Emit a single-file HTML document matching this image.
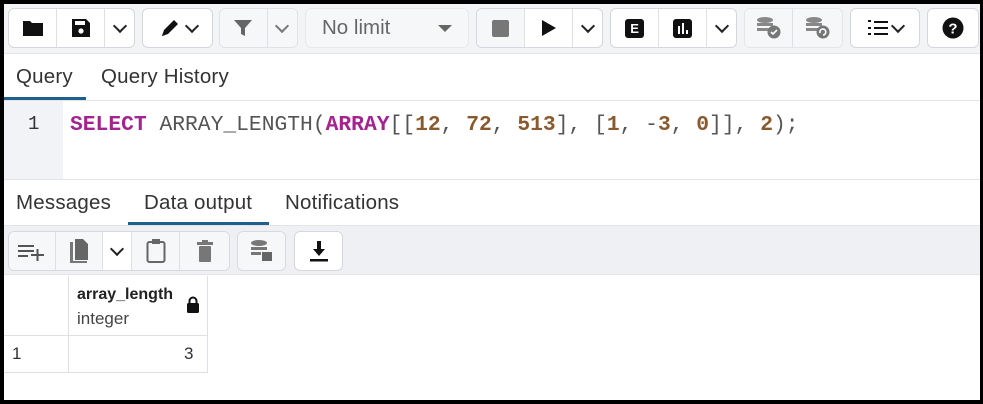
<!DOCTYPE html>
<html><head><meta charset="utf-8"><style>
*{box-sizing:border-box;margin:0;padding:0}
body{width:983px;height:404px;background:#000;position:relative;overflow:hidden;font-family:"Liberation Sans",sans-serif}
#f{position:absolute;left:4px;top:4px;width:976px;height:396px;background:#fff;overflow:hidden}
.a{position:absolute}
.tb{position:absolute;top:0;left:0;width:976px;height:50px;background:#f3f4f6;border-bottom:1px solid #e2e4e8}
.g{position:absolute;top:4px;height:40px;background:#fff;border:1px solid #d4d7dd;border-radius:6px;display:flex;overflow:hidden}
.g>div{height:100%;border-right:1px solid #dde0e5;display:flex;align-items:center;justify-content:center}
.g>div:last-child{border-right:none}
.dis{background:#f6f7f9!important}
.chev{width:10px;height:10px;border-right:2px solid #222;border-bottom:2px solid #222;transform:rotate(45deg);margin-top:-5px}
.tab{position:absolute;font-size:20.5px;color:#333;letter-spacing:0.2px}
</style></head><body><div id="f">
<div class="tb">
 <div class="g" style="left:4px;width:127px">
  <div style="width:49px"><svg width="22" height="18" viewBox="0 0 22 18"><path d="M1 2h7l2 2h11v13H1z" fill="#111"/></svg></div>
  <div style="width:49px"><svg width="20" height="20" viewBox="0 0 20 20"><path d="M1 1h14l4 4v14H1z" fill="#111"/><rect x="4" y="3" width="10" height="4" fill="#fff"/><circle cx="10" cy="13" r="2.6" fill="#fff"/></svg></div>
  <div style="width:29px"><div class="chev"></div></div>
 </div>
 <div class="g" style="left:138px;width:71px"><div style="width:71px;gap:6px"><svg width="22" height="22" viewBox="0 0 22 22"><path d="M3 19l2-6L15 3l4 4L9 17z" fill="#111"/><path d="M3 19l1-3 2 2z" fill="#111"/></svg><div class="chev"></div></div></div>
 <div class="g dis" style="left:215px;width:79px;border-color:#e0e2e6">
  <div class="dis" style="width:49px"><svg width="20" height="20" viewBox="0 0 20 20"><path d="M1 2h18l-7 8v8l-4-2v-6z" fill="#666"/></svg></div>
  <div class="dis" style="width:30px"><div class="chev" style="border-color:#777"></div></div>
 </div>
 <div class="g dis" style="left:301px;width:164px;border-color:#e6e8eb"><div class="dis" style="width:164px;justify-content:space-between;padding:0 16px;font-size:20.5px;color:#666">No limit<span style="border-left:7px solid transparent;border-right:7px solid transparent;border-top:7px solid #666"></span></div></div>
 <div class="g" style="left:472px;width:127px">
  <div class="dis" style="width:49px"><div style="width:17px;height:17px;background:#777;border-radius:2px"></div></div>
  <div style="width:49px"><svg width="16" height="18"><path d="M1 1l14 8-14 8z" fill="#111"/></svg></div>
  <div style="width:29px"><div class="chev"></div></div>
 </div>
 <div class="g" style="left:606px;width:127px">
  <div style="width:49px"><div style="width:19px;height:19px;background:#111;border-radius:3px;color:#fff;font-size:13px;font-weight:bold;text-align:center;line-height:19px">E</div></div>
  <div style="width:49px"><svg width="19" height="19"><rect width="19" height="19" rx="3" fill="#111"/><rect x="5" y="7" width="2" height="8" fill="#fff"/><rect x="9" y="4" width="2" height="11" fill="#fff"/><rect x="13" y="11" width="2" height="4" fill="#fff"/></svg></div>
  <div style="width:29px"><div class="chev"></div></div>
 </div>
 <div class="g dis" style="left:740px;width:99px;border-color:#e3e5e8">
  <div class="dis" style="width:49px"><svg width="26" height="24"><ellipse cx="9" cy="4" rx="8" ry="3" fill="#888"/><rect x="1" y="7" width="16" height="3" fill="#888"/><rect x="1" y="12" width="12" height="3" fill="#888"/><circle cx="18" cy="16" r="6.5" fill="#777"/><path d="M15 16l2 2 4-4" stroke="#fff" stroke-width="1.6" fill="none"/></svg></div>
  <div class="dis" style="width:50px"><svg width="26" height="24"><ellipse cx="9" cy="4" rx="8" ry="3" fill="#888"/><rect x="1" y="7" width="16" height="3" fill="#888"/><rect x="1" y="12" width="12" height="3" fill="#888"/><circle cx="18" cy="16" r="6.5" fill="#777"/><path d="M15 17a3 3 0 1 1 3 2" stroke="#fff" stroke-width="1.6" fill="none"/></svg></div>
 </div>
 <div class="g" style="left:846px;width:70px"><div style="width:70px;gap:4px"><svg width="22" height="20"><g fill="#111"><rect x="7" y="3" width="14" height="2"/><rect x="7" y="9" width="14" height="2"/><rect x="7" y="15" width="14" height="2"/><rect x="1" y="2" width="3" height="2"/><rect x="1" y="9" width="3" height="2"/><rect x="1" y="15" width="3" height="2"/></g></svg><div class="chev"></div></div></div>
 <div class="g" style="left:923px;width:52px"><div style="width:52px"><svg width="22" height="22"><circle cx="11" cy="11" r="10.5" fill="#111"/><text x="11" y="16.5" text-anchor="middle" font-size="15" font-weight="bold" fill="#fff" font-family="Liberation Sans">?</text></svg></div></div>
</div>
<div class="tab" style="left:12px;top:61px">Query</div>
<div class="tab" style="left:97px;top:61px">Query History</div>
<div class="a" style="left:0;top:93px;width:82px;height:3px;background:#1f5f8b"></div>
<div class="a" style="left:0;top:96px;width:976px;height:1px;background:#e2e4e8"></div>
<div class="a" style="left:0;top:97px;width:59px;height:78px;background:#f2f3f6"></div>
<div class="a" style="left:24px;top:109px;font-family:'Liberation Mono',monospace;font-size:19px;color:#333">1</div>
<div class="a" style="left:66px;top:109px;font-family:'Liberation Mono',monospace;font-size:21.3px;color:#555;white-space:pre"><b style="color:#a3238f">SELECT</b> ARRAY_LENGTH(<b style="color:#a3238f">ARRAY</b>[[<b style="color:#8a5a2e">12</b>, <b style="color:#8a5a2e">72</b>, <b style="color:#8a5a2e">513</b>], [<b style="color:#8a5a2e">1</b>, -<b style="color:#8a5a2e">3</b>, <b style="color:#8a5a2e">0</b>]], <b style="color:#8a5a2e">2</b>);</div>
<div class="a" style="left:0;top:175px;width:976px;height:1px;background:#e2e4e8"></div>
<div class="tab" style="left:12px;top:187px">Messages</div>
<div class="tab" style="left:140px;top:187px">Data output</div>
<div class="tab" style="left:281px;top:187px">Notifications</div>
<div class="a" style="left:124px;top:218px;width:141px;height:3px;background:#1f5f8b"></div>
<div class="a" style="left:0;top:221px;width:976px;height:50px;background:#eef0f4;border-top:1px solid #e2e4e8;border-bottom:1px solid #e2e4e8"></div>
<div class="g" style="top:227px;left:4px;width:222px;border-color:#d6d9de">
 <div class="dis" style="width:47px"><svg width="30" height="20"><g fill="#555"><rect x="1" y="4" width="16" height="2"/><rect x="1" y="9" width="16" height="2"/><rect x="1" y="14" width="10" height="2"/><rect x="14" y="13" width="13" height="2"/><rect x="19.5" y="8" width="2" height="12"/></g></svg></div>
 <div class="dis" style="width:48px"><svg width="22" height="26"><path d="M2 4h3v19h14v2H2z" fill="#777"/><path d="M7 1h8l5 5v16H7z" fill="#666"/></svg></div>
 <div style="width:29px"><div class="chev"></div></div>
 <div class="dis" style="width:49px"><svg width="20" height="26"><rect x="1.5" y="4" width="17" height="20" rx="2" stroke="#666" stroke-width="2" fill="none"/><rect x="6" y="1" width="8" height="5" fill="#666"/></svg></div>
 <div class="dis" style="width:49px"><svg width="18" height="24"><rect x="1" y="3" width="16" height="3" fill="#777"/><rect x="6" y="1" width="6" height="2" fill="#777"/><rect x="3" y="7" width="12" height="16" rx="1" fill="#777"/></svg></div>
</div>
<div class="g dis" style="top:227px;left:233px;width:49px;border-color:#d6d9de"><div class="dis" style="width:49px"><svg width="26" height="24"><ellipse cx="10" cy="4" rx="8" ry="3" fill="#777"/><rect x="2" y="8" width="16" height="3" fill="#777"/><rect x="2" y="13" width="10" height="3" fill="#777"/><rect x="13" y="13" width="10" height="9" fill="#666"/></svg></div></div>
<div class="g" style="top:227px;left:290px;width:49px"><div style="width:49px"><svg width="20" height="22"><path d="M8 1h4v8h4l-6 7-6-7h4z" fill="#111"/><rect x="1" y="19" width="18" height="2.5" fill="#111"/></svg></div></div>
<div class="a" style="left:0;top:272px;width:204px;height:97px;border-right:1px solid #dde0e5"></div>
<div class="a" style="left:64px;top:272px;width:1px;height:97px;background:#dde0e5"></div>
<div class="a" style="left:0;top:331px;width:204px;height:1px;background:#dde0e5"></div>
<div class="a" style="left:0;top:368px;width:204px;height:1px;background:#dde0e5"></div>
<div class="a" style="left:73px;top:282px;font-size:16px;font-weight:bold;color:#222">array_length</div>
<div class="a" style="left:73px;top:305px;font-size:17px;color:#444">integer</div>
<svg class="a" style="left:182px;top:292px" width="14" height="17"><path d="M3.5 7V5a3.5 3.5 0 0 1 7 0v2" stroke="#111" stroke-width="2" fill="none"/><rect x="1" y="7" width="12" height="10" rx="1.5" fill="#111"/></svg>
<div class="a" style="left:8px;top:340px;font-size:17px;color:#333">1</div>
<div class="a" style="left:180px;top:340px;font-size:17px;color:#333">3</div>
</div></body></html>
